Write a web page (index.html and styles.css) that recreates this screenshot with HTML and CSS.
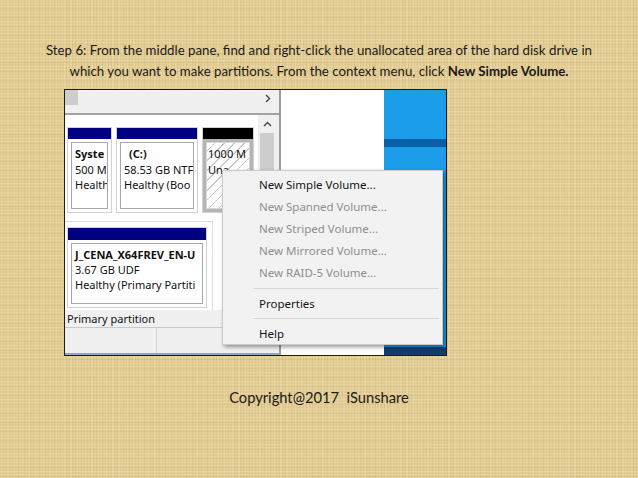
FILE: index.html
```html
<!DOCTYPE html>
<html>
<head>
<meta charset="utf-8">
<link rel="stylesheet" href="styles.css">
</head>
<body>
<div class="page">
  <p class="caption">Step 6: From the middle pane, find and right-click the unallocated area of the hard disk drive in<br>which you want to make partitions. From the context menu, click <b>New Simple Volume.</b></p>
  <div class="shot">
    <div class="left">
      <div class="hscroll">
        <span class="hthumb"></span>
        <svg class="harrow" width="6" height="9" viewBox="0 0 6 9"><path d="M1 1 L4.5 4.5 L1 8" fill="none" stroke="#444" stroke-width="1.4"/></svg>
      </div>
      <div class="graph">
        <div class="disks">
          <div class="disk d1">
            <div class="part w1"><div class="bar"></div><div class="pbody"><div class="pin"><b>Syste</b><br>500 M<br>Health</div></div></div>
            <div class="part w2"><div class="bar"></div><div class="pbody"><div class="pin"><b class="cl">(C:)</b><br>58.53 GB NTF<br>Healthy (Boo</div></div></div>
            <div class="part w3 unal"><div class="bar black"></div><div class="pbody"><div class="pin hatch">1000 M<br>Una</div></div></div>
          </div>
          <div class="d2wrap">
            <div class="disk">
              <div class="part w4"><div class="bar"></div><div class="pbody"><div class="pin"><b>J_CENA_X64FREV_EN-U</b><br>3.67 GB UDF<br>Healthy (Primary Partiti</div></div></div>
            </div>
          </div>
        </div>
        <div class="vscroll">
          <svg class="varrow" width="9" height="6" viewBox="0 0 9 6"><path d="M1 5 L4.5 1.5 L8 5" fill="none" stroke="#444" stroke-width="1.4"/></svg>
          <span class="vthumb"></span>
        </div>
      </div>
      <div class="legend">Primary partition</div>
      <div class="status"><span class="sp1"></span><span class="sp2"></span></div>
    </div>
    <div class="mid"></div>
    <div class="desk"><div class="band"></div><div class="task"></div></div>
    <div class="menu">
      <div class="item">New Simple Volume...</div>
      <div class="item dis">New Spanned Volume...</div>
      <div class="item dis">New Striped Volume...</div>
      <div class="item dis">New Mirrored Volume...</div>
      <div class="item dis">New RAID-5 Volume...</div>
      <div class="sep s1"></div>
      <div class="item">Properties</div>
      <div class="sep s2"></div>
      <div class="item">Help</div>
    </div>
  </div>
  <p class="copy">Copyright@2017&nbsp; iSunshare</p>
</div>
</body>
</html>
```

FILE: styles.css
```css
* { box-sizing: border-box; }
html, body { margin: 0; padding: 0; }
body {
  width: 638px;
  height: 478px;
  overflow: hidden;
  background-color: #e3cd94;
  background-image:
    repeating-linear-gradient(0deg, rgba(255,246,215,0.20) 0 1px, transparent 1px 3px),
    repeating-linear-gradient(90deg, rgba(140,105,40,0.10) 0 1px, transparent 1px 3px),
    repeating-linear-gradient(90deg, rgba(255,245,210,0.12) 0 2px, transparent 2px 7px),
    repeating-linear-gradient(0deg, rgba(150,115,50,0.07) 0 2px, transparent 2px 9px);
  font-family: Lato, "Liberation Sans", sans-serif;
  color: #1c1a14;
}
.page { display: flex; flex-direction: column; align-items: center; }
.caption {
  margin: 40px 0 0;
  font-size: 13.25px;
  line-height: 21px;
  text-align: center;
}
.copy { margin: 32px 0 0; font-size: 14.7px; line-height: 18px; }

.shot {
  align-self: flex-start;
  margin: 7px 0 0 64px;
  width: 383px;
  height: 267px;
  border: 1px solid #1c1c1c;
  display: flex;
  position: relative;
  background: #f0f0f0;
  font-family: "Noto Sans", sans-serif;
  font-size: 11px;
  color: #111;
}
.left {
  width: 216px;
  border-right: 2px solid #9a9a9a;
  display: flex;
  flex-direction: column;
  background: #f0f0f0;
}
.hscroll {
  height: 25px;
  border-bottom: 2px solid #a3a3a3;
  display: flex;
  justify-content: space-between;
  align-items: flex-start;
  padding-right: 8px;
}
.hthumb { width: 13px; height: 15px; background: #cdcdcd; }
.harrow { margin-top: 4px; }
.graph {
  height: 195px;
  display: flex;
  background: #fff;
}
.disks { flex: 1; padding-top: 12px; }
.disk { display: flex; gap: 4px; padding-left: 2px; }
.part { border: 1px solid #d2d2d2; background: #fff; }
.bar { height: 11px; background: #000080; }
.bar.black { background: #000; }
.pbody { height: 73px; padding: 3px; }
.pin {
  height: 100%;
  border: 1px solid #a8a8a8;
  padding: 3px 0 0 3px;
  line-height: 15.5px;
  white-space: nowrap;
  overflow: hidden;
}
.cl { padding-left: 5px; }
.w1 { width: 45px; }
.w2 { width: 82px; }
.w3 { width: 52px; }
.w4 { width: 140px; }
.unal .pbody { background: #b4b4b4; }
.unal .pin { padding-left: 1px; }
.hatch {
  border-color: #d6d6d6;
  background: repeating-linear-gradient(135deg, #fff 0 5px, #c9c9c9 5px 6px, #fff 6px 7px);
}
.d2wrap {
  margin-top: 8px;
  width: 148px;
  height: 89px;
  border-top: 1px solid #dcdcdc;
  border-right: 1px solid #dcdcdc;
  padding-top: 5px;
}
.d2wrap .bar { height: 12px; }
.d2wrap .pbody { height: 67px; }
.d2wrap .pin { line-height: 15px; }
.vscroll {
  width: 21px;
  background: #f0f0f0;
  display: flex;
  flex-direction: column;
  align-items: center;
  padding-top: 6px;
}
.varrow { margin-bottom: 6px; margin-right: 3px; }
.vthumb { width: 14px; height: 90px; background: #cdcdcd; margin-right: 3px; }
.legend {
  height: 18px;
  border-bottom: 1px solid #c9c9c9;
  padding-left: 2px;
  line-height: 17px;
  font-size: 11px;
}
.status {
  flex: 1;
  display: flex;
  border-bottom: 2px solid #8ea6c4;
}
.sp1 { width: 92px; border-right: 1px solid #d4d4d4; }
.mid { width: 103px; background: #fff; }
.desk {
  flex: 1;
  background: #1b9de9;
  display: flex;
  flex-direction: column;
}
.band { margin-top: 49px; height: 8px; background: #0c5ea6; }
.task { margin-top: auto; height: 8px; background: #0f3d72; }

.menu {
  position: absolute;
  left: 157px;
  top: 80px;
  width: 221px;
  height: 175px;
  background: #f2f2f2;
  border: 1px solid #cbcbcb;
  box-shadow: 2px 2px 4px rgba(0,0,0,0.4);
  padding: 3px 2px 2px 0;
  font-size: 11.5px;
  color: #141414;
}
.item { height: 22px; line-height: 22px; padding-left: 36px; white-space: nowrap; }
.item.dis { color: #8e8e8e; }
.sep { height: 1px; background: #d7d7d7; margin-left: 30px; margin-right: 1px; }
.s1 { margin-top: 4px; margin-bottom: 4px; }
.s2 { margin-top: 3px; margin-bottom: 4px; }
```
